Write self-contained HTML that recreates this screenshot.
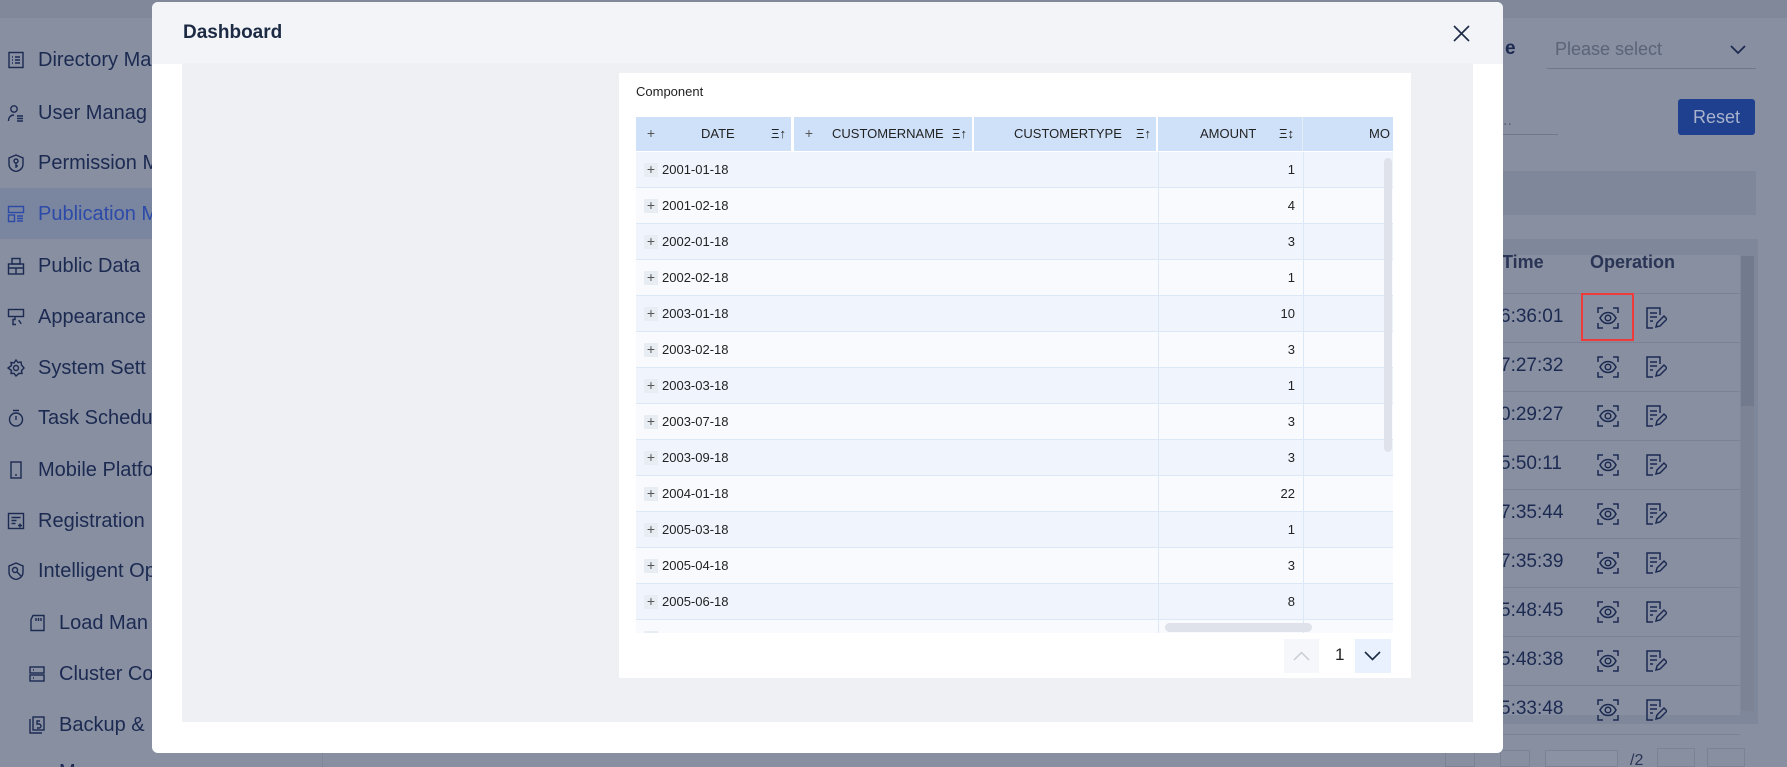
<!DOCTYPE html>
<html style="width:1787px;height:767px;overflow:hidden"><head><meta charset="utf-8">
<style>
*{margin:0;padding:0;box-sizing:border-box}
body{width:1787px;height:767px;overflow:hidden;position:relative;background:#878fa0;font-family:"Liberation Sans",sans-serif;color:#1c2a52}
.a{position:absolute}
.top{left:0;top:0;width:1787px;height:18px;background:#808899}
.side{left:0;top:18px;width:323px;height:749px;background:#878fa0;border-right:1px solid #7e8697}
.mi{position:absolute;left:38px;font-size:20px;line-height:24px;white-space:nowrap;color:#1c2a52}
.mi.sub{left:59px}
.ic{position:absolute;width:18px;height:18px}
.hl{left:0;top:188px;width:323px;height:51px;background:#7a85a0}
.modal{left:152px;top:2px;width:1351px;height:751px;background:#fff;border-radius:6px;overflow:hidden}
.mh{left:0;top:0;width:1351px;height:62px;background:#f2f4f8}
.body{left:30px;top:61px;width:1291px;height:659px;background:#eff0f4}
.box{left:437px;top:10px;width:792px;height:605px;background:#fff}
.tbl{left:17px;top:44px;width:757px;height:516px;overflow:hidden}
.th{position:absolute;top:0;height:34px;background:#cfe1f9;font-size:13px;line-height:34px;color:#222;border-right:2px solid #fff;z-index:2}
.row{position:absolute;left:0;width:757px;height:36px;border-bottom:1px solid #dde8f6;font-size:13px;line-height:36px;color:#222}
.pl{position:absolute;width:14px;height:14px;background:#e8edf4;color:#555;font-size:14px;line-height:13px;text-align:center}
.rt{color:#1c2a52;font-size:19px}
.rl{position:absolute;left:1475px;width:265px;height:1px;background:#7a8294}
</style></head><body>
<div class="a top"></div>
<div class="a side">
<div class="a hl" style="top:170px"></div>
</div>
<svg class="ic" style="left:7px;top:51px" viewBox="0 0 18 18" fill="none" stroke="#1c2a52" stroke-width="1.4"><rect x="2" y="1.5" width="14" height="15"/><path d="M5 6h1M8 6h5M5 9h1M8 9h5M5 12h1M8 12h5"/></svg>
<div class="mi" style="top:48px">Directory Ma</div>
<svg class="ic" style="left:7px;top:104px" viewBox="0 0 18 18" fill="none" stroke="#1c2a52" stroke-width="1.4"><circle cx="7" cy="5" r="3.2"/><path d="M1.5 17c0-4 2.5-6 5.5-6M10 12h6M10 14.5h6M10 17h6"/></svg>
<div class="mi" style="top:101px">User Manag</div>
<svg class="ic" style="left:7px;top:154px" viewBox="0 0 18 18" fill="none" stroke="#1c2a52" stroke-width="1.4"><path d="M9 1l7 3v6c0 4-3 6.5-7 7.5C5 16.5 2 14 2 10V4z"/><circle cx="9" cy="7" r="2"/><path d="M9 9v5M9 12h2"/></svg>
<div class="mi" style="top:151px">Permission M</div>
<svg class="ic" style="left:7px;top:205px" viewBox="0 0 18 18" fill="none" stroke="#2c4aa8" stroke-width="1.4"><rect x="1.5" y="1.5" width="15" height="6"/><rect x="1.5" y="10" width="6" height="6.5"/><path d="M10 11h6M10 13.5h6M10 16h6"/></svg>
<div class="mi" style="top:202px;color:#2c4aa8">Publication M</div>
<svg class="ic" style="left:7px;top:257px" viewBox="0 0 18 18" fill="none" stroke="#1c2a52" stroke-width="1.4"><rect x="1.5" y="7" width="15" height="10"/><rect x="5" y="1.5" width="8" height="5.5"/><path d="M1.5 11h15M9 11v6"/></svg>
<div class="mi" style="top:254px">Public Data</div>
<svg class="ic" style="left:7px;top:308px" viewBox="0 0 18 18" fill="none" stroke="#1c2a52" stroke-width="1.4"><rect x="1.5" y="1.5" width="15" height="7"/><path d="M8 8.5v3h-2v5h3M12 12c0 2 2 2 2 4"/></svg>
<div class="mi" style="top:305px">Appearance</div>
<svg class="ic" style="left:7px;top:359px" viewBox="0 0 18 18" fill="none" stroke="#1c2a52" stroke-width="1.4"><path d="M9 1l2 2.5 3-.5 .5 3L17 9l-2.5 2.5.5 3-3-.2L9 17l-2-2.7-3 .2.5-3L1 9l3.5-2.5L4 3.5l3 .5z"/><circle cx="9" cy="9" r="2.5"/></svg>
<div class="mi" style="top:356px">System Sett</div>
<svg class="ic" style="left:7px;top:409px" viewBox="0 0 18 18" fill="none" stroke="#1c2a52" stroke-width="1.4"><circle cx="9" cy="10.5" r="6.5"/><path d="M6 1.5h6M9 7v4"/></svg>
<div class="mi" style="top:406px">Task Schedu</div>
<svg class="ic" style="left:7px;top:461px" viewBox="0 0 18 18" fill="none" stroke="#1c2a52" stroke-width="1.4"><rect x="4" y="1" width="10" height="16"/><path d="M8 14h2"/></svg>
<div class="mi" style="top:458px">Mobile Platfo</div>
<svg class="ic" style="left:7px;top:512px" viewBox="0 0 18 18" fill="none" stroke="#1c2a52" stroke-width="1.4"><rect x="1.5" y="1.5" width="15" height="15"/><path d="M4.5 5.5h9M4.5 8.5h5M4.5 11.5h4M11 13.5h4M13 11.5v4"/></svg>
<div class="mi" style="top:509px">Registration</div>
<svg class="ic" style="left:7px;top:562px" viewBox="0 0 18 18" fill="none" stroke="#1c2a52" stroke-width="1.4"><path d="M9 1l7 3v6c0 4-3 6.5-7 7.5C5 16.5 2 14 2 10V4z"/><circle cx="8" cy="8" r="2.5"/><path d="M10 10l4 4"/></svg>
<div class="mi" style="top:559px">Intelligent Op</div>
<svg class="ic" style="left:28px;top:614px" viewBox="0 0 18 18" fill="none" stroke="#1c2a52" stroke-width="1.4"><path d="M5 1.5h11v15H3v-11z"/><path d="M8 4v3M10.5 4v3M13 4v3"/></svg>
<div class="mi sub" style="top:611px">Load Man</div>
<svg class="ic" style="left:28px;top:665px" viewBox="0 0 18 18" fill="none" stroke="#1c2a52" stroke-width="1.4"><rect x="2" y="2" width="14" height="6"/><rect x="2" y="10" width="14" height="6"/><path d="M5 5h1M5 13h1"/></svg>
<div class="mi sub" style="top:662px">Cluster Co</div>
<svg class="ic" style="left:28px;top:716px" viewBox="0 0 18 18" fill="none" stroke="#1c2a52" stroke-width="1.4"><path d="M2 3v14h12"/><rect x="5" y="1" width="11" height="13"/><path d="M12 5h-3v3h2a2 2 0 010 4h-2"/></svg>
<div class="mi sub" style="top:713px">Backup &amp;</div>
<div class="mi sub" style="top:760px">Ma</div>

<div class="a rt" style="left:1505px;top:38px;font-weight:bold">e</div>
<div class="a" style="left:1555px;top:39px;font-size:18px;color:#5b6478">Please select</div>
<svg class="a" style="left:1729px;top:44px" width="18" height="12" viewBox="0 0 18 12" fill="none" stroke="#1c2a52" stroke-width="1.8"><path d="M2 2l7 7 7-7"/></svg>
<div class="a" style="left:1547px;top:68px;width:209px;height:1px;background:#6f788c"></div>
<div class="a" style="left:1503px;top:112px;font-size:16px;color:#5b6478">..</div>
<div class="a" style="left:1480px;top:134px;width:78px;height:1px;background:#6f788c"></div>
<div class="a" style="left:1678px;top:99px;width:77px;height:36px;background:#1f3f8f;border-radius:3px;color:#a9b4cc;font-size:18px;line-height:36px;text-align:center">Reset</div>
<div class="a" style="left:1470px;top:171px;width:286px;height:44px;background:#7f889a"></div>
<div class="a" style="left:1470px;top:239px;width:288px;height:485px;background:#7f889a"></div>
<div class="a" style="left:1470px;top:255px;width:270px;height:460px;background:#878fa0"></div>
<div class="a" style="left:1741px;top:256px;width:13px;height:455px;background:#7b8395"></div>
<div class="a" style="left:1741px;top:256px;width:13px;height:150px;background:#727b8e"></div>
<div class="a" style="left:1502px;top:252px;font-size:18px;font-weight:bold;color:#2a3555">Time</div>
<div class="a" style="left:1590px;top:252px;font-size:18px;font-weight:bold;color:#2a3555">Operation</div>
<div class="rl" style="top:293px"></div>
<div id="rrows"></div>
<div class="a" style="left:1445px;top:750px;width:30px;height:17px;border:1px solid #7a8294"></div>
<div class="a" style="left:1500px;top:750px;width:30px;height:17px;border:1px solid #7a8294"></div>
<div class="a" style="left:1545px;top:750px;width:73px;height:17px;border:1px solid #7a8294;background:#8a92a3"></div>
<div class="a" style="left:1630px;top:752px;font-size:16px;color:#2a3555">/2</div>
<div class="a" style="left:1657px;top:748px;width:38px;height:19px;border:1px solid #7a8294"></div>
<div class="a" style="left:1707px;top:748px;width:38px;height:19px;border:1px solid #7a8294"></div>

<div class="a modal">
 <div class="a mh"></div>
 <div class="a" style="left:31px;top:20px;font-size:19px;font-weight:bold;color:#1c2a44">Dashboard</div>
 <svg class="a" style="left:1301px;top:23px" width="17" height="17" viewBox="0 0 17 17" stroke="#1c2a44" stroke-width="1.6"><path d="M1 1l15 15M16 1L1 16"/></svg>
 <div class="a body">
  <div class="a box" id="box">
   <div class="a" style="left:17px;top:11px;font-size:13px;color:#222">Component</div>
   <div class="a tbl" id="tbl">
    <div class="th" style="left:0;width:157px"><span class="pl" style="left:8px;top:10px;background:none">+</span><span style="position:absolute;left:65px">DATE</span><span style="position:absolute;left:135px">Ξ↑</span></div>
    <div class="th" style="left:158px;width:180px"><span class="pl" style="left:8px;top:10px;background:none">+</span><span style="position:absolute;left:38px">CUSTOMERNAME</span><span style="position:absolute;left:158px">Ξ↑</span></div>
    <div class="th" style="left:338px;width:184px"><span style="position:absolute;left:40px">CUSTOMERTYPE</span><span style="position:absolute;left:162px">Ξ↑</span></div>
    <div class="th" style="left:522px;width:145px;border-right:1px solid #e4ecf7"><span style="position:absolute;left:42px">AMOUNT</span><span style="position:absolute;left:121px">Ξ↕</span></div>
    <div class="th" style="left:667px;width:100px;border:none"><span style="position:absolute;left:66px">MO</span></div>
   </div>
  </div>
 </div>
</div>
<script>
(function(){
var d=["2001-01-18",1,"2001-02-18",4,"2002-01-18",3,"2002-02-18",1,"2003-01-18",10,"2003-02-18",3,"2003-03-18",1,"2003-07-18",3,"2003-09-18",3,"2004-01-18",22,"2005-03-18",1,"2005-04-18",3,"2005-06-18",8,"",""];
var t=document.getElementById('tbl'),h='';
for(var i=0;i<14;i++){var ty=35+i*36;h+='<div class="row" style="top:'+ty+'px;background:'+(i%2?'#f8fafe':'#f0f5fd')+'"><span class="pl" style="left:8px;top:11px">+</span><span style="position:absolute;left:26px">'+d[i*2]+'</span><span style="position:absolute;left:522px;top:0;width:1px;height:36px;background:#dde8f6"></span><span style="position:absolute;left:667px;top:0;width:1px;height:36px;background:#dde8f6"></span><span style="position:absolute;left:522px;width:137px;text-align:right">'+d[i*2+1]+'</span></div>';}
h+='<div style="position:absolute;left:748px;top:41px;width:8px;height:294px;background:#dfe2ea;border-radius:4px"></div>';
h+='<div style="position:absolute;left:529px;top:506px;width:147px;height:9px;background:#dfe2ea;border-radius:5px"></div>';
t.insertAdjacentHTML('beforeend',h);
document.getElementById('box').insertAdjacentHTML('beforeend','<div class="a" style="left:665px;top:566px;width:35px;height:34px;background:#f5f7fa"></div><svg class="a" style="left:674px;top:578px" width="17" height="10" viewBox="0 0 17 10" fill="none" stroke="#c8ccd4" stroke-width="1.5"><path d="M1 9l7.5-7.5L16 9"/></svg><div class="a" style="left:716px;top:572px;font-size:17px;color:#222">1</div><div class="a" style="left:736px;top:566px;width:36px;height:34px;background:#e8f1fd"></div><svg class="a" style="left:745px;top:578px" width="17" height="10" viewBox="0 0 17 10" fill="none" stroke="#1c2a44" stroke-width="1.6"><path d="M1 1l7.5 7.5L16 1"/></svg>');
var times=["6:36:01","7:27:32","0:29:27","5:50:11","7:35:44","7:35:39","5:48:45","5:48:38","5:33:48"],r='';
for(var j=0;j<9;j++){var y=293+j*49;
r+='<div class="a" style="left:1500px;top:'+(y+13)+'px;font-size:19px;color:#1c2a52">'+times[j]+'</div>';
r+='<svg class="a" style="left:1597px;top:'+(y+14)+'px" width="22" height="22" viewBox="0 0 22 22" fill="none" stroke="#1c2a52" stroke-width="1.5"><path d="M1 6V1h5M16 1h5v5M21 16v5h-5M6 21H1v-5"/><path d="M3 11c2-4 5-5.5 8-5.5s6 1.5 8 5.5c-2 4-5 5.5-8 5.5S5 15 3 11z"/><circle cx="11" cy="11" r="2.8"/></svg>';
r+='<svg class="a" style="left:1645px;top:'+(y+14)+'px" width="22" height="22" viewBox="0 0 22 22" fill="none" stroke="#1c2a52" stroke-width="1.5"><path d="M15 8V1H2v20h6M5 6h7M5 10h7M5 14h3"/><path d="M11 20l1-4 7-7 3 3-7 7z"/></svg>';
r+='<div class="rl" style="top:'+(y+49)+'px"></div>';}
r+='<div class="a" style="left:1581px;top:293px;width:53px;height:48px;border:2px solid #ef3b3b"></div>';
document.getElementById('rrows').innerHTML=r;
})();
</script>
</body></html>
